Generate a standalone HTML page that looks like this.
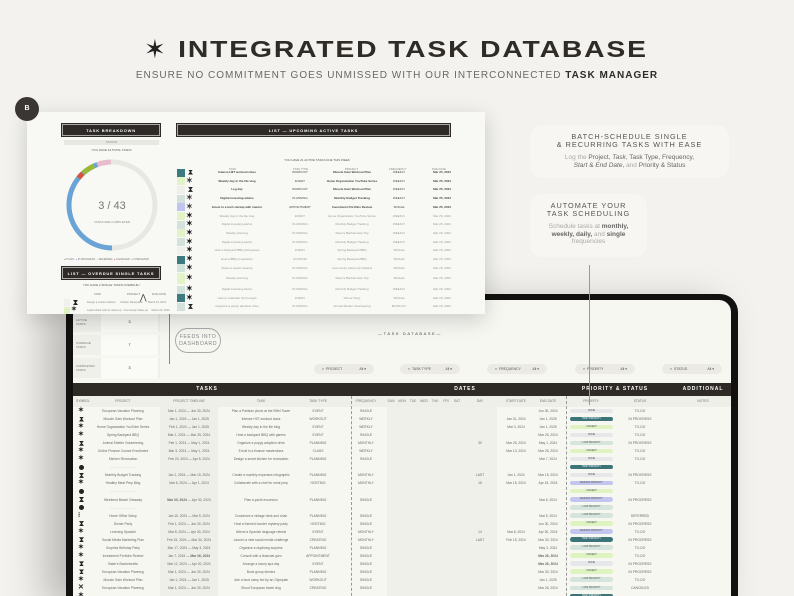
<!DOCTYPE html>
<html><head><meta charset="utf-8">
<style>
*{margin:0;padding:0;box-sizing:border-box}
html{width:794px;height:596px;overflow:hidden}
body{width:794px;height:596px;overflow:hidden;background:#f3f2ee;font-family:"Liberation Sans",sans-serif;position:relative;color:#2e2b27}
.abs{position:absolute}
h1{position:absolute;left:16px;width:794px;top:36px;text-align:center;font-size:23px;font-weight:900;letter-spacing:1.5px;color:#2f2b26;transform:scaleX(1.23);transform-origin:center}
.sub{position:absolute;left:0;width:794px;top:70px;text-align:center;font-size:10px;letter-spacing:1px;color:#6b6862}
.sub b{color:#2f2b26;font-weight:600}
.tab{position:absolute;left:66px;top:294px;width:672px;height:302px;background:#121110;border-radius:18px 18px 0 0;box-shadow:-20px 10px 40px rgba(0,0,0,.25)}
.scr{position:absolute;left:73px;top:300px;width:658px;height:296px;background:#f7f7f2;border-radius:12px 12px 0 0;overflow:hidden}
.box{position:absolute;left:0;width:87px;height:20px;background:#f0f0eb;font-size:3px;color:#777;padding:6px 0 0 3px}
.box i{position:absolute;left:28px;top:0;width:57px;height:20px;background:#fafaf7;font-style:normal;font-size:4px;text-align:center;line-height:20px;color:#333}
.flt{position:absolute;top:64px;width:60px;height:10px;border-radius:5px;background:#ebeae4;font-size:3.5px;line-height:10px;padding-left:8px;color:#555}
.bar{position:absolute;left:0;top:83px;width:658px;height:13px;background:#2e2b27;color:#fff;font-size:5px;font-weight:900;letter-spacing:1px;line-height:13px}
.bar span{position:absolute;transform:translateX(-50%)}
.hdr{position:absolute;left:0;top:96px;width:658px;height:11px;background:#efefe9;font-size:3.3px;color:#777;line-height:11px}
.hdr span,.r span{position:absolute;top:0;transform:translateX(-50%);white-space:nowrap}
.rows{position:absolute;left:0;top:107px;width:658px}
.r{position:relative;height:8.06px;font-size:3.3px;color:#666;line-height:8px}
.tl{position:absolute;left:87px;top:107px;width:58px;height:200px;background:#efefea}
.st{position:absolute;left:5px;top:0;font-size:7px;color:#222;line-height:8px}
.hg{position:absolute;left:6px;top:1.5px;width:5px;height:5px;background:#222;clip-path:polygon(0 0,100% 0,60% 50%,100% 100%,0 100%,40% 50%)}
.dot{position:absolute;left:6px;top:1.5px;width:5px;height:5px;border-radius:50%;background:#222}
.pill{position:absolute;left:497px;top:1.5px;width:43px;height:4.5px;border-radius:3px;font-size:2.5px;line-height:4.5px;text-align:center;color:#555}
.n{background:#e6e7ea}.h{background:#3d7479;color:#fff}.u{background:#dff3c2}.l{background:#d5e4dc}.m{background:#c2c6ee}
.card{position:absolute;left:27px;top:112px;width:458px;height:202px;background:#f8f8f4;box-shadow:0 6px 20px rgba(0,0,0,.18)}
.dh{position:absolute;background:#2e2b27;color:#fff;font-size:4px;font-weight:900;letter-spacing:.8px;text-align:center;line-height:12px;height:12px;border:1px solid #aaa;outline:1px solid #2e2b27}
.cr{position:absolute;left:150px;width:290px;height:8.7px;font-size:3px;color:#444;line-height:8.7px}
.cr span{position:absolute;transform:translateX(-50%);white-space:nowrap}
.sq{position:absolute;left:0;top:0.5px;width:8px;height:8px}
.callout{position:absolute;background:#f7f6f2;border-radius:12px;text-align:center;color:#555}
</style></head><body>

<div class="abs" style="left:144px;top:38px;font-size:26px;color:#222;line-height:22px">✶</div>
<h1>INTEGRATED TASK DATABASE</h1>
<div class="sub">ENSURE NO COMMITMENT GOES UNMISSED WITH OUR INTERCONNECTED <b>TASK MANAGER</b></div>

<div class="callout" style="left:530px;top:125px;width:199px;height:53px;padding-top:8px">
<div style="font-size:7.3px;letter-spacing:1px;line-height:8px;color:#555">BATCH-SCHEDULE SINGLE<br>&amp; RECURRING TASKS WITH EASE</div>
<div style="font-size:6.5px;line-height:7.5px;margin-top:5px;color:#aaa">Log the <span style="color:#666">Project, <i>Task</i>, Task Type, Frequency,<br><i>Start</i> &amp; <i>End Date</i>,</span> and <span style="color:#666">Priority &amp; Status</span></div></div>
<div class="callout" style="left:530px;top:194px;width:117px;height:63px;padding-top:8px">
<div style="font-size:7.3px;letter-spacing:1px;line-height:8px;color:#555">AUTOMATE YOUR<br>TASK SCHEDULING</div>
<div style="font-size:6.5px;line-height:7.5px;margin-top:5px;color:#aaa">Schedule tasks at <b style="color:#666">monthly,<br>weekly, daily,</b> and <b style="color:#666">single</b><br>frequencies</div></div>

<div class="tab"></div>
<div class="scr">
 <div class="box" style="top:12px">ACTIVE<br>TASKS<i>3</i></div>
 <div class="box" style="top:35px">OVERDUE<br>TASKS<i>7</i></div>
 <div class="box" style="top:58px">COMPLETED<br>TASKS<i>3</i></div>
 <div class="abs" style="left:102px;top:28px;width:46px;height:25px;border:1px solid #aaa;border-radius:13px;font-size:5.3px;line-height:7px;text-align:center;padding-top:5px;color:#888;letter-spacing:.5px">FEEDS INTO<br>DASHBOARD</div>
 <div class="abs" style="left:305px;top:31px;font-size:4px;letter-spacing:1.6px;color:#444">—TASK DATABASE—</div>
 <div class="flt" style="left:241px">× &nbsp;PROJECT<span style="position:absolute;right:8px">All ▾</span></div>
 <div class="flt" style="left:327px">× &nbsp;TASK TYPE<span style="position:absolute;right:8px">All ▾</span></div>
 <div class="flt" style="left:414px">× &nbsp;FREQUENCY<span style="position:absolute;right:8px">All ▾</span></div>
 <div class="flt" style="left:502px">× &nbsp;PRIORITY<span style="position:absolute;right:8px">All ▾</span></div>
 <div class="flt" style="left:589px">× &nbsp;STATUS<span style="position:absolute;right:8px">All ▾</span></div>
 <div class="bar"><span style="left:134px">TASKS</span><span style="left:392px">DATES</span><span style="left:542px">PRIORITY &amp; STATUS</span><span style="left:630px">ADDITIONAL</span></div>
 <div class="hdr"><span style="left:10px">SYMBOL</span><span style="left:50px">PROJECT</span><span style="left:116px">PROJECT TIMELINE</span><span style="left:188px">TASK</span><span style="left:245px">TASK TYPE</span><span style="left:293px">FREQUENCY</span><span style="left:318px">SUN</span><span style="left:329px">MON</span><span style="left:340px">TUE</span><span style="left:351px">WED</span><span style="left:362px">THU</span><span style="left:373px">FRI</span><span style="left:384px">SAT</span><span style="left:407px">DAY</span><span style="left:443px">START DATE</span><span style="left:475px">END DATE</span><span style="left:518px">PRIORITY</span><span style="left:567px">STATUS</span><span style="left:630px">NOTES</span></div>
 <div class="tl"></div>
 <div class="abs" style="left:314px;top:107px;width:76px;height:200px;background:#f0f0eb"></div>
 <div class="abs" style="left:388px;top:107px;width:36px;height:200px;background:#f0f0eb"></div>
 <div class="abs" style="left:278px;top:96px;height:210px;border-left:0.8px dashed #999"></div>
 <div class="abs" style="left:493px;top:96px;height:210px;border-left:0.8px dashed #999"></div>
 <div class="rows">
  <div class="r"><b class="st">✶</b><span style="left:50px">European Vacation Planning</span><span style="left:116px">Mar 1, 2024 — Jun 30, 2024</span><span style="left:188px">Plan a Parisian picnic at the Eiffel Tower</span><span style="left:245px">EVENT</span><span style="left:293px">SINGLE</span><span style="left:475px">Jun 30, 2024</span><div class="pill n">NONE</div><span style="left:567px">TO-DO</span></div>
  <div class="r"><i class="hg"></i><span style="left:50px">Muscle Gain Workout Plan</span><span style="left:116px">Jan 1, 2024 — Jan 1, 2025</span><span style="left:188px">Intense HIIT workout class</span><span style="left:245px">WORKOUT</span><span style="left:293px">WEEKLY</span><span style="left:443px">Jan 31, 2024</span><span style="left:475px">Jan 1, 2025</span><div class="pill h">HIGH PRIORITY</div><span style="left:567px">IN PROGRESS</span></div>
  <div class="r"><b class="st">✶</b><span style="left:50px">Home Organization YouTube Series</span><span style="left:116px">Feb 1, 2024 — Jan 1, 2025</span><span style="left:188px">Weekly day in the life blog</span><span style="left:245px">EVENT</span><span style="left:293px">WEEKLY</span><span style="left:443px">Mar 3, 2024</span><span style="left:475px">Jan 1, 2025</span><div class="pill u">URGENT</div><span style="left:567px">TO-DO</span></div>
  <div class="r"><b class="st">✶</b><span style="left:50px">Spring Backyard BBQ</span><span style="left:116px">Mar 1, 2024 — Mar 25, 2024</span><span style="left:188px">Host a backyard BBQ with games</span><span style="left:245px">EVENT</span><span style="left:293px">SINGLE</span><span style="left:475px">Mar 25, 2024</span><div class="pill n">NONE</div><span style="left:567px">TO-DO</span></div>
  <div class="r"><i class="hg"></i><span style="left:50px">Animal Shelter Volunteering</span><span style="left:116px">Feb 1, 2024 — May 1, 2024</span><span style="left:188px">Organize a puppy adoption drive</span><span style="left:245px">PLANNING</span><span style="left:293px">MONTHLY</span><span style="left:407px">30</span><span style="left:443px">Mar 25, 2024</span><span style="left:475px">May 1, 2024</span><div class="pill l">LOW PRIORITY</div><span style="left:567px">IN PROGRESS</span></div>
  <div class="r"><b class="st">✶</b><span style="left:50px">Online Finance Course Enrollment</span><span style="left:116px">Mar 3, 2024 — May 1, 2024</span><span style="left:188px">Enroll in a finance masterclass</span><span style="left:245px">CLASS</span><span style="left:293px">WEEKLY</span><span style="left:443px">Mar 13, 2024</span><span style="left:475px">Mar 28, 2024</span><div class="pill u">URGENT</div><span style="left:567px">TO-DO</span></div>
  <div class="r"><b class="st">✶</b><span style="left:50px">Kitchen Renovation</span><span style="left:116px">Feb 20, 2024 — Apr 5, 2024</span><span style="left:188px">Design a smart kitchen for renovation</span><span style="left:245px">PLANNING</span><span style="left:293px">SINGLE</span><span style="left:475px">Mar 7, 2024</span><div class="pill n">NONE</div><span style="left:567px">TO-DO</span></div>
  <div class="r" style="color:#ccc"><i class="dot"></i><span style="left:50px">————————</span><div class="pill h">HIGH PRIORITY</div></div>
  <div class="r"><i class="hg"></i><span style="left:50px">Monthly Budget Tracking</span><span style="left:116px">Jan 1, 2024 — Mar 15, 2024</span><span style="left:188px">Create a monthly expenses infographic</span><span style="left:245px">PLANNING</span><span style="left:293px">MONTHLY</span><span style="left:407px">LAST</span><span style="left:443px">Jan 1, 2024</span><span style="left:475px">Mar 15, 2024</span><div class="pill n">NONE</div><span style="left:567px">IN PROGRESS</span></div>
  <div class="r"><b class="st">✶</b><span style="left:50px">Healthy Meal Prep Blog</span><span style="left:116px">Mar 6, 2024 — Apr 1, 2024</span><span style="left:188px">Collaborate with a chef for meal prep</span><span style="left:245px">HOSTING</span><span style="left:293px">MONTHLY</span><span style="left:407px">15</span><span style="left:443px">Mar 15, 2024</span><span style="left:475px">Apr 15, 2024</span><div class="pill m">MEDIUM PRIORITY</div><span style="left:567px">TO-DO</span></div>
  <div class="r" style="color:#ccc"><i class="dot"></i><span style="left:50px">————————</span><div class="pill u">URGENT</div></div>
  <div class="r"><i class="hg"></i><span style="left:50px">Weekend Beach Getaway</span><span style="left:116px"><b>Mar 30, 2024</b> — Apr 30, 2024</span><span style="left:188px">Plan a yacht excursion</span><span style="left:245px">PLANNING</span><span style="left:293px">SINGLE</span><span style="left:475px">Mar 6, 2024</span><div class="pill m">MEDIUM PRIORITY</div><span style="left:567px">IN PROGRESS</span></div>
  <div class="r" style="color:#ccc"><i class="dot"></i><span style="left:50px">————————</span><div class="pill l">LOW PRIORITY</div></div>
  <div class="r"><b class="st">⁝</b><span style="left:50px">Home Office Setup</span><span style="left:116px">Jan 15, 2024 — Mar 5, 2024</span><span style="left:188px">Customize a vintage desk and chair</span><span style="left:245px">PLANNING</span><span style="left:293px">SINGLE</span><span style="left:475px">Mar 5, 2024</span><div class="pill l">LOW PRIORITY</div><span style="left:567px">DEFERRED</span></div>
  <div class="r"><i class="hg"></i><span style="left:50px">Dinner Party</span><span style="left:116px">Feb 1, 2024 — Jun 30, 2024</span><span style="left:188px">Host a themed murder mystery party</span><span style="left:245px">HOSTING</span><span style="left:293px">SINGLE</span><span style="left:475px">Jun 30, 2024</span><div class="pill u">URGENT</div><span style="left:567px">IN PROGRESS</span></div>
  <div class="r"><b class="st">✶</b><span style="left:50px">Learning Spanish</span><span style="left:116px">Mar 8, 2024 — Apr 30, 2024</span><span style="left:188px">Attend a Spanish language retreat</span><span style="left:245px">EVENT</span><span style="left:293px">MONTHLY</span><span style="left:407px">14</span><span style="left:443px">Mar 8, 2024</span><span style="left:475px">Apr 30, 2024</span><div class="pill m">MEDIUM PRIORITY</div><span style="left:567px">TO-DO</span></div>
  <div class="r"><i class="hg"></i><span style="left:50px">Social Media Marketing Plan</span><span style="left:116px">Feb 15, 2024 — Mar 30, 2024</span><span style="left:188px">Launch a viral social media challenge</span><span style="left:245px">CREATING</span><span style="left:293px">MONTHLY</span><span style="left:407px">LAST</span><span style="left:443px">Feb 15, 2024</span><span style="left:475px">Mar 30, 2024</span><div class="pill h">HIGH PRIORITY</div><span style="left:567px">IN PROGRESS</span></div>
  <div class="r"><b class="st">✶</b><span style="left:50px">Surprise Birthday Party</span><span style="left:116px">Mar 17, 2024 — May 3, 2024</span><span style="left:188px">Organize a skydiving surprise</span><span style="left:245px">PLANNING</span><span style="left:293px">SINGLE</span><span style="left:475px">May 3, 2024</span><div class="pill l">LOW PRIORITY</div><span style="left:567px">TO-DO</span></div>
  <div class="r"><b class="st">✶</b><span style="left:50px">Investment Portfolio Review</span><span style="left:116px">Jan 7, 2024 — <b>Mar 26, 2024</b></span><span style="left:188px">Consult with a financial guru</span><span style="left:245px">APPOINTMENT</span><span style="left:293px">SINGLE</span><span style="left:475px"><b>Mar 26, 2024</b></span><div class="pill u">URGENT</div><span style="left:567px">TO-DO</span></div>
  <div class="r"><i class="hg"></i><span style="left:50px">Sister's Bachelorette</span><span style="left:116px">Mar 12, 2024 — Apr 20, 2024</span><span style="left:188px">Arrange a luxury spa day</span><span style="left:245px">EVENT</span><span style="left:293px">SINGLE</span><span style="left:475px"><b>Mar 26, 2024</b></span><div class="pill n">NONE</div><span style="left:567px">IN PROGRESS</span></div>
  <div class="r"><i class="hg"></i><span style="left:50px">European Vacation Planning</span><span style="left:116px">Mar 1, 2024 — Jun 30, 2024</span><span style="left:188px">Book group dinners</span><span style="left:245px">PLANNING</span><span style="left:293px">SINGLE</span><span style="left:475px">Mar 30, 2024</span><div class="pill u">URGENT</div><span style="left:567px">IN PROGRESS</span></div>
  <div class="r"><b class="st">✶</b><span style="left:50px">Muscle Gain Workout Plan</span><span style="left:116px">Jan 1, 2024 — Jan 1, 2025</span><span style="left:188px">Join a boot camp led by an Olympian</span><span style="left:245px">WORKOUT</span><span style="left:293px">SINGLE</span><span style="left:475px">Jan 1, 2025</span><div class="pill l">LOW PRIORITY</div><span style="left:567px">TO-DO</span></div>
  <div class="r"><b class="st">✕</b><span style="left:50px">European Vacation Planning</span><span style="left:116px">Mar 1, 2024 — Jun 30, 2024</span><span style="left:188px">Shoot European travel vlog</span><span style="left:245px">CREATING</span><span style="left:293px">SINGLE</span><span style="left:475px">Mar 26, 2024</span><div class="pill l">LOW PRIORITY</div><span style="left:567px">CANCELED</span></div>
  <div class="r"><b class="st">✶</b><div class="pill h">HIGH PRIORITY</div></div>
 </div>
</div>

<div class="abs" style="left:589px;top:265px;width:1px;height:140px;background:#999"></div>
<div class="abs" style="left:169px;top:296px;width:1px;height:68px;background:#888"></div>

<div class="card">
 <div class="dh" style="left:35px;top:12px;width:98px">TASK BREAKDOWN</div>
 <div class="dh" style="left:150px;top:12px;width:273px">LIST — UPCOMING ACTIVE TASKS</div>
 <div class="abs" style="left:37px;top:28px;width:95px;height:5px;background:#e8e8e3;font-size:3px;text-align:center;color:#888">STATUS</div>
 <div class="abs" style="left:37px;top:36px;width:95px;font-size:3px;text-align:center;color:#555">YOU HAVE 43 TOTAL TASKS</div>
 <svg class="abs" style="left:37px;top:45px" width="96" height="96" viewBox="0 0 96 96">
  <circle cx="48" cy="48" r="43" fill="none" stroke="#e8e8e3" stroke-width="5"/>
  <circle cx="48" cy="48" r="43" fill="none" stroke="#6aa3d6" stroke-width="5" stroke-dasharray="120 400" transform="rotate(90 48 48)"/>
  <circle cx="48" cy="48" r="43" fill="none" stroke="#e7bccb" stroke-width="5" stroke-dasharray="14 400" transform="rotate(250 48 48)"/>
  <circle cx="48" cy="48" r="43" fill="none" stroke="#d9533a" stroke-width="5" stroke-dasharray="6 400" transform="rotate(219 48 48)"/>
  <circle cx="48" cy="48" r="43" fill="none" stroke="#9cb93a" stroke-width="5" stroke-dasharray="13 400" transform="rotate(228 48 48)"/>
  <text x="48" y="52" font-size="11" text-anchor="middle" fill="#777" font-family="Liberation Sans">3 / 43</text>
  <text x="48" y="66" font-size="3" text-anchor="middle" fill="#888" font-family="Liberation Sans">TASKS ARE COMPLETED</text>
 </svg>
 <div class="abs" style="left:37px;top:146px;width:100px;font-size:2.5px;color:#777;white-space:nowrap">● TO-DO &nbsp;<span style="color:#6aa3d6">●</span> IN PROGRESS &nbsp;<span style="color:#e7bccb">●</span> DEFERRED &nbsp;<span style="color:#d9533a">●</span> CANCELED &nbsp;<span style="color:#9cb93a">●</span> COMPLETED</div>
 <div class="dh" style="left:35px;top:155px;width:98px">LIST — OVERDUE SINGLE TASKS</div>
 <div class="abs" style="left:37px;top:171px;width:95px;font-size:3px;text-align:center;color:#555">YOU HAVE 2 SINGLE TASKS OVERDUE !</div>
 <div class="abs" style="left:37px;top:180px;width:110px;font-size:2.8px;color:#777"><span style="position:absolute;left:30px">TASK</span><span style="position:absolute;left:63px">PROJECT</span><span style="position:absolute;left:88px">DUE DATE</span></div>
 <div class="abs" style="left:37px;top:187px;width:6px;height:7px;background:#f0f0ec"></div><i class="hg" style="left:46px;top:188px"></i>
 <div class="abs" style="left:37px;top:195px;width:6px;height:7px;background:#dff3c2"></div><b class="abs" style="left:44px;top:193px;font-size:7px">✶</b>
 <div class="abs" style="left:60px;top:189px;font-size:2.6px;color:#888;white-space:nowrap">Design a custom cabinet &nbsp; &nbsp; &nbsp; Kitchen Renovation &nbsp; &nbsp; &nbsp; March 10, 2024</div>
 <div class="abs" style="left:60px;top:197px;font-size:2.6px;color:#888;white-space:nowrap">Lead a flash mob for clean-up &nbsp; Community Clean-up &nbsp; &nbsp; March 20, 2024</div>
 <div class="abs" style="left:150px;top:46px;width:280px;font-size:3px;text-align:center;color:#555">YOU HAVE 21 ACTIVE TASKS DUE THIS WEEK</div>
 <div class="abs" style="left:150px;top:55px;width:280px;font-size:2.8px;color:#888"><span style="position:absolute;left:52px">TASK</span><span style="position:absolute;left:116px">TASK TYPE</span><span style="position:absolute;left:168px">PROJECT</span><span style="position:absolute;left:212px">FREQUENCY</span><span style="position:absolute;left:255px">DUE DATE</span></div>
 <div class="cr" style="top:56px"><div class="sq" style="background:#3d7a80"></div><i class="hg" style="left:11px"></i><span style="left:60px;font-weight:bold">Intense HIIT workout class</span><span style="left:123px">WORKOUT</span><span style="left:175px;font-weight:bold">Muscle Gain Workout Plan</span><span style="left:222px">WEEKLY</span><span style="left:265px;font-weight:bold">Mar 25, 2024</span></div>
 <div class="cr" style="top:64.7px"><div class="sq" style="background:#e3f2c8"></div><b style="position:absolute;left:9px;font-size:8px">✶</b><span style="left:60px;font-weight:bold">Weekly day in the life vlog</span><span style="left:123px">EVENT</span><span style="left:175px;font-weight:bold">Home Organization YouTube Series</span><span style="left:222px">WEEKLY</span><span style="left:265px;font-weight:bold">Mar 25, 2024</span></div>
 <div class="cr" style="top:73.4px"><div class="sq" style="background:#efefeb"></div><i class="hg" style="left:11px"></i><span style="left:60px;font-weight:bold">Leg day</span><span style="left:123px">WORKOUT</span><span style="left:175px;font-weight:bold">Muscle Gain Workout Plan</span><span style="left:222px">WEEKLY</span><span style="left:265px;font-weight:bold">Mar 25, 2024</span></div>
 <div class="cr" style="top:82.1px"><div class="sq" style="background:#d3e2dc"></div><b style="position:absolute;left:9px;font-size:8px">✶</b><span style="left:60px;font-weight:bold">Digital investing advice</span><span style="left:123px">PLANNING</span><span style="left:175px;font-weight:bold">Monthly Budget Tracking</span><span style="left:222px">WEEKLY</span><span style="left:265px;font-weight:bold">Mar 25, 2024</span></div>
 <div class="cr" style="top:90.8px"><div class="sq" style="background:#c0c4ee"></div><b style="position:absolute;left:9px;font-size:8px">✶</b><span style="left:60px;font-weight:bold">Invest in a tech startup with mentor</span><span style="left:123px">APPOINTMENT</span><span style="left:175px;font-weight:bold">Investment Portfolio Review</span><span style="left:222px">SINGLE</span><span style="left:265px;font-weight:bold">Mar 25, 2024</span></div>
 <div class="cr" style="top:99.5px;color:#999"><div class="sq" style="background:#e3f2c8"></div><b style="position:absolute;left:9px;font-size:8px;color:#222">✶</b><span style="left:60px">Weekly day in the life vlog</span><span style="left:123px">EVENT</span><span style="left:175px">Home Organization YouTube Series</span><span style="left:222px">WEEKLY</span><span style="left:265px">Mar 26, 2024</span></div>
 <div class="cr" style="top:108.2px;color:#999"><div class="sq" style="background:#d3e2dc"></div><b style="position:absolute;left:9px;font-size:8px;color:#222">✶</b><span style="left:60px">Digital investing advice</span><span style="left:123px">PLANNING</span><span style="left:175px">Monthly Budget Tracking</span><span style="left:222px">WEEKLY</span><span style="left:265px">Mar 26, 2024</span></div>
 <div class="cr" style="top:116.9px;color:#999"><div class="sq" style="background:#e3f2c8"></div><b style="position:absolute;left:9px;font-size:8px;color:#222">✶</b><span style="left:60px">Weekly planning</span><span style="left:123px">PLANNING</span><span style="left:175px">Sister's Bachelorette Trip</span><span style="left:222px">WEEKLY</span><span style="left:265px">Mar 26, 2024</span></div>
 <div class="cr" style="top:125.6px;color:#999"><div class="sq" style="background:#d3e2dc"></div><b style="position:absolute;left:9px;font-size:8px;color:#222">✶</b><span style="left:60px">Digital investing advice</span><span style="left:123px">PLANNING</span><span style="left:175px">Monthly Budget Tracking</span><span style="left:222px">WEEKLY</span><span style="left:265px">Mar 26, 2024</span></div>
 <div class="cr" style="top:134.3px;color:#999"><div class="sq" style="background:#f0f0ec"></div><b style="position:absolute;left:9px;font-size:8px;color:#222">✶</b><span style="left:60px">Host a backyard BBQ with games</span><span style="left:123px">EVENT</span><span style="left:175px">Spring Backyard BBQ</span><span style="left:222px">SINGLE</span><span style="left:265px">Mar 25, 2024</span></div>
 <div class="cr" style="top:143px;color:#999"><div class="sq" style="background:#3d7a80"></div><b style="position:absolute;left:9px;font-size:8px;color:#222">✶</b><span style="left:60px">Host a BBQ competition</span><span style="left:123px">HOSTING</span><span style="left:175px">Spring Backyard BBQ</span><span style="left:222px">SINGLE</span><span style="left:265px">Mar 25, 2024</span></div>
 <div class="cr" style="top:151.7px;color:#999"><div class="sq" style="background:#d3e2dc"></div><b style="position:absolute;left:9px;font-size:8px;color:#222">✶</b><span style="left:60px">Select a beach cleanup</span><span style="left:123px">PLANNING</span><span style="left:175px">Community Clean-Up Initiative</span><span style="left:222px">SINGLE</span><span style="left:265px">Mar 25, 2024</span></div>
 <div class="cr" style="top:160.4px;height:12px;color:#999"><div class="sq" style="background:#e3f2c8;height:11px"></div><b style="position:absolute;left:9px;top:2px;font-size:8px;color:#222">✶</b><span style="left:60px;top:2px">Weekly planning</span><span style="left:123px;top:2px">PLANNING</span><span style="left:175px;top:2px">Sister's Bachelorette Trip</span><span style="left:222px;top:2px">SINGLE</span><span style="left:265px;top:2px">Mar 25, 2024</span></div>
 <div class="cr" style="top:173px;color:#999"><div class="sq" style="background:#d3e2dc"></div><b style="position:absolute;left:9px;font-size:8px;color:#222">✶</b><span style="left:60px">Digital investing advice</span><span style="left:123px">PLANNING</span><span style="left:175px">Monthly Budget Tracking</span><span style="left:222px">WEEKLY</span><span style="left:265px">Mar 26, 2024</span></div>
 <div class="cr" style="top:181.7px;color:#999"><div class="sq" style="background:#3d7a80"></div><b style="position:absolute;left:9px;font-size:8px;color:#222">✶</b><span style="left:60px">How to celebrate chef tonight</span><span style="left:123px">EVENT</span><span style="left:175px">Dinner Party</span><span style="left:222px">SINGLE</span><span style="left:265px">Mar 26, 2024</span></div>
 <div class="cr" style="top:190.4px;color:#999"><div class="sq" style="background:#d3e2dc"></div><i class="hg" style="left:11px"></i><span style="left:60px">Organize a puppy adoption drive</span><span style="left:123px">PLANNING</span><span style="left:175px">Animal Shelter Volunteering</span><span style="left:222px">MONTHLY</span><span style="left:265px">Mar 26, 2024</span></div>
</div>
<div class="abs" style="left:140px;top:293px;font-size:8px;color:#333">⋀</div>
<div class="abs" style="left:15px;top:97px;width:24px;height:24px;border-radius:50%;background:#3a3633;color:#fff;font-size:7px;font-weight:bold;text-align:center;line-height:24px">B</div>
</body></html>
